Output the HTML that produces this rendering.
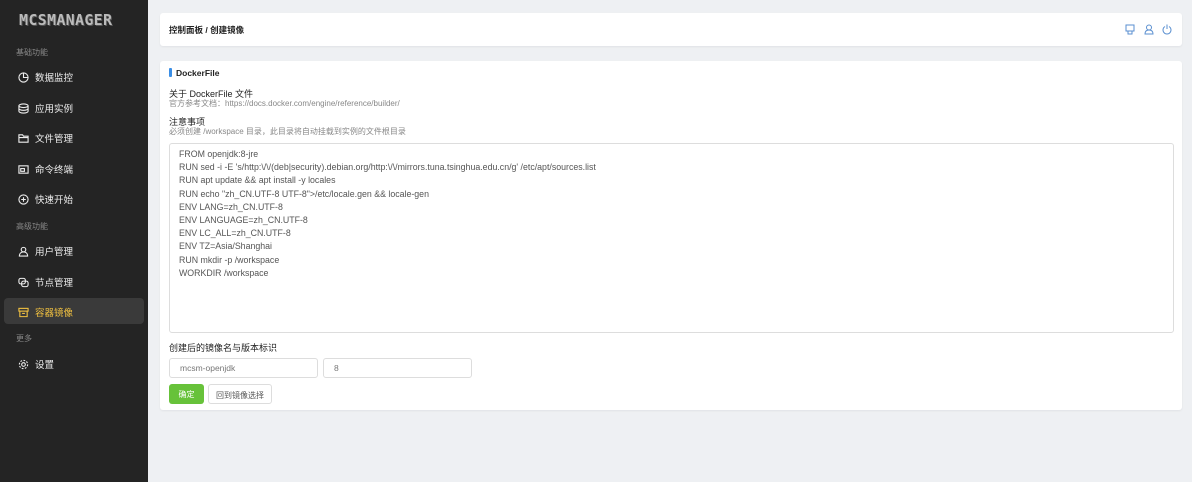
<!DOCTYPE html>
<html><head><meta charset="utf-8"><style>
*{box-sizing:border-box;margin:0;padding:0}
body{width:1192px;height:482px;overflow:hidden;background:#eef0f3;font-family:"Liberation Sans","Noto Sans CJK SC",sans-serif;position:relative}
.sb{position:absolute;left:0;top:0;width:148px;height:482px;background:#242424;color:#e6e6e6}
.logo{position:absolute;left:19px;top:11px;font-family:"DejaVu Sans Mono",monospace;font-weight:bold;font-size:15px;color:#bbb;letter-spacing:0.3px;text-shadow:1px 1px 0 #555}
.grp{position:absolute;left:16px;font-size:8px;color:#888}
.it{position:absolute;left:18px;font-size:9.5px;display:flex;align-items:center;gap:6px;color:#eee}
.it svg{width:11px;height:11px}
.act{position:absolute;left:4px;top:298px;width:140px;height:26px;background:#3a3a3a;border-radius:4px}
.card{position:absolute;background:#fff;border-radius:3px;box-shadow:0 1px 2px rgba(0,0,0,.06)}
.t{position:absolute;font-size:9px;color:#222}
.s{position:absolute;font-size:8px;color:#888}
.ta{position:absolute;left:169px;top:143px;width:1005px;height:190px;border:1px solid #ddd;border-radius:3px;padding:4px 9px;font-size:8.8px;color:#555;line-height:13.2px;white-space:pre}
.in{position:absolute;top:358px;height:20px;border:1px solid #ddd;border-radius:3px;font-size:8.5px;color:#777;padding:4px 10px}
.btn{position:absolute;top:384px;height:20px;border-radius:3px;font-size:8px;padding:5px 0;text-align:center}
</style></head><body>
<div class="sb">
<div class="logo">MCSMANAGER</div>
<div class="grp" style="top:47px">基础功能</div>
<div class="it" style="top:70px"><svg viewBox="0 0 12 12" fill="none" stroke="#eee" stroke-width="1.2"><circle cx="6" cy="6" r="5"/><path d="M6 1v5h5"/></svg>数据监控</div>
<div class="it" style="top:101px"><svg viewBox="0 0 12 12" fill="none" stroke="#eee" stroke-width="1.2"><ellipse cx="6" cy="3" rx="5" ry="2"/><path d="M1 3v6c0 1 2 2 5 2s5-1 5-2V3M1 6c0 1 2 2 5 2s5-1 5-2"/></svg>应用实例</div>
<div class="it" style="top:131px"><svg viewBox="0 0 12 12" fill="none" stroke="#eee" stroke-width="1.2"><path d="M1 2h4l1 1.5h5V10H1z M1 5h10"/></svg>文件管理</div>
<div class="it" style="top:162px"><svg viewBox="0 0 12 12" fill="none" stroke="#eee" stroke-width="1.2"><rect x="1" y="2" width="10" height="8"/><rect x="3" y="5" width="4" height="3"/></svg>命令终端</div>
<div class="it" style="top:192px"><svg viewBox="0 0 12 12" fill="none" stroke="#eee" stroke-width="1.2"><circle cx="6" cy="6" r="5"/><path d="M6 3.5v5M3.5 6h5"/></svg>快速开始</div>
<div class="grp" style="top:221px">高级功能</div>
<div class="it" style="top:244px"><svg viewBox="0 0 12 12" fill="none" stroke="#eee" stroke-width="1.2"><circle cx="6" cy="4" r="2.5"/><path d="M1.5 11c0-3 2-4.5 4.5-4.5s4.5 1.5 4.5 4.5z"/></svg>用户管理</div>
<div class="it" style="top:275px"><svg viewBox="0 0 12 12" fill="none" stroke="#eee" stroke-width="1.2"><rect x="1" y="1.5" width="7" height="6" rx="2"/><rect x="4" y="4.5" width="7" height="6" rx="2"/></svg>节点管理</div>
<div class="act"></div>
<div class="it" style="top:305px;color:#f0c040"><svg viewBox="0 0 12 12" fill="none" stroke="#f0c040" stroke-width="1.2"><rect x="1" y="1.5" width="10" height="3"/><path d="M2 4.5V10.5h8V4.5M4.5 7h3"/></svg>容器镜像</div>
<div class="grp" style="top:333px">更多</div>
<div class="it" style="top:357px"><svg viewBox="0 0 12 12" fill="none" stroke="#eee" stroke-width="1.2"><circle cx="6" cy="6" r="2"/><circle cx="6" cy="6" r="4.5" stroke-dasharray="2 1.5"/></svg>设置</div>
</div>

<div class="card" style="left:160px;top:13px;width:1022px;height:33px"></div>
<div class="t" style="left:169px;top:24px;font-weight:bold;font-size:8.5px">控制面板 / 创建镜像</div>
<svg style="position:absolute;left:1125px;top:24px" width="50" height="12" viewBox="0 0 50 12" fill="none" stroke="#5a8fd0" stroke-width="1"><rect x="1" y="1" width="8" height="6"/><path d="M3 7v3h4V7"/><circle cx="24" cy="3.5" r="2.5"/><path d="M20 10c0-3 2-4 4-4s4 1 4 4z"/><path d="M40 2.5a4 4 0 1 0 4 0M42 0.5v4.5"/></svg>

<div class="card" style="left:160px;top:61px;width:1022px;height:349px"></div>
<div style="position:absolute;left:169px;top:68px;width:3px;height:9px;background:#3a8ee6;border-radius:1px"></div>
<div class="t" style="left:176px;top:68px;font-weight:bold;font-size:8.5px">DockerFile</div>
<div class="t" style="left:169px;top:87px">关于 DockerFile 文件</div>
<div class="s" style="left:169px;top:98px">官方参考文档：https://docs.docker.com/engine/reference/builder/</div>
<div class="t" style="left:169px;top:115px">注意事项</div>
<div class="s" style="left:169px;top:126px">必须创建 /workspace 目录，此目录将自动挂载到实例的文件根目录</div>
<div class="ta">FROM openjdk:8-jre
RUN sed -i -E 's/http:\/\/(deb|security).debian.org/http:\/\/mirrors.tuna.tsinghua.edu.cn/g' /etc/apt/sources.list
RUN apt update &amp;&amp; apt install -y locales
RUN echo "zh_CN.UTF-8 UTF-8"&gt;/etc/locale.gen &amp;&amp; locale-gen
ENV LANG=zh_CN.UTF-8
ENV LANGUAGE=zh_CN.UTF-8
ENV LC_ALL=zh_CN.UTF-8
ENV TZ=Asia/Shanghai
RUN mkdir -p /workspace
WORKDIR /workspace</div>
<div class="t" style="left:169px;top:341px">创建后的镜像名与版本标识</div>
<div class="in" style="left:169px;width:149px">mcsm-openjdk</div>
<div class="in" style="left:323px;width:149px">8</div>
<div class="btn" style="left:169px;width:35px;background:#67c23a;color:#fff">确定</div>
<div class="btn" style="left:208px;width:64px;border:1px solid #ddd;color:#555;background:#fff">回到镜像选择</div>
</body></html>
